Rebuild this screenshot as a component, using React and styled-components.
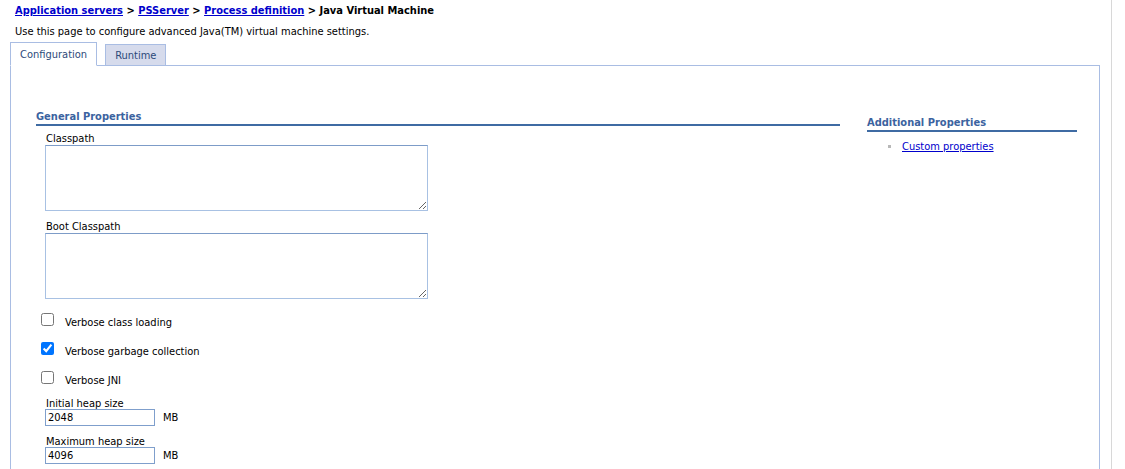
import React from 'react';
import styled, { createGlobalStyle } from 'styled-components';

const GlobalStyle = createGlobalStyle`
  html, body {
    margin: 0;
    padding: 0;
    background: #fff;
  }
  body {
    font-family: 'DejaVu Sans Condensed', 'DejaVu Sans', sans-serif;
    font-size: 11px;
    color: #000;
  }
`;

const Frame = styled.div`
  width: 1112px;
  height: 469px;
  border-right: 1px solid #d8d8d8;
  box-sizing: border-box;
  overflow: hidden;
`;

const Header = styled.div`
  padding: 4px 0 0 15px;
`;

const Breadcrumb = styled.div`
  font-weight: bold;
  font-size: 11px;
  line-height: 14px;
  a {
    color: #0000cc;
    text-decoration: underline;
  }
`;

const Description = styled.p`
  margin: 7px 0 0;
  line-height: 14px;
`;

const TabBar = styled.div`
  display: flex;
  align-items: flex-end;
  gap: 8px;
  margin: 2px 0 0 10px;
  height: 24px;
`;

const Tab = styled.div`
  box-sizing: border-box;
  height: ${p => (p.active ? '24px' : '22px')};
  padding: ${p => (p.active ? '1px' : '0')} 9px 0;
  display: flex;
  align-items: center;
  border: 1px solid #a9bde3;
  border-bottom: ${p => (p.active ? '1px solid #fff' : '1px solid #a9bde3')};
  background: ${p => (p.active ? '#fff' : '#d6dbec')};
  color: #2d4a7a;
  margin-bottom: -1px;
  position: relative;
  z-index: 1;
`;

const Panel = styled.div`
  margin-left: 10px;
  width: 1090px;
  height: 420px;
  box-sizing: border-box;
  border: 1px solid #a9bde3;
  border-bottom: none;
  display: flex;
  padding: 45px 0 0 25px;
  gap: 27px;
`;

const MainColumn = styled.div`
  width: 804px;
`;

const SideColumn = styled.div`
  width: 210px;
  padding-top: 6px;
`;

const SectionTitle = styled.div`
  font-weight: bold;
  color: #3b63a0;
  line-height: 12px;
  padding-bottom: 1px;
  border-bottom: 2px solid #3f6ba3;
`;

const Field = styled.div`
  padding-left: 9px;
  margin-top: ${p => p.top || 0}px;
`;

const Label = styled.div`
  line-height: ${p => (p.compact ? '10px' : '12px')};
  padding-left: 1px;
`;

const TextArea = styled.textarea`
  display: block;
  box-sizing: border-box;
  width: 383px;
  height: 66px;
  margin: 0;
  border: 1px solid #a8c1e3;
  border-top-color: #7d9cc8;
  font: inherit;
`;

const CheckRow = styled.label`
  display: flex;
  align-items: center;
  height: 29px;
  margin-left: -4px;
  input {
    margin: 0 11px 0 0;
    width: 13px;
    height: 13px;
    accent-color: #0075ff;
    position: relative;
    top: -2px;
  }
  span {
    position: relative;
    top: 1px;
  }
`;

const SizeRow = styled.div`
  display: flex;
  align-items: center;
  gap: 8px;
`;

const SizeInput = styled.input`
  box-sizing: border-box;
  width: 110px;
  height: 17px;
  margin: 0;
  padding: 0 2px;
  border: 1px solid #7f9fcc;
  font: inherit;
  font-size: 11px;
`;

const LinkList = styled.ul`
  list-style: none;
  margin: 8px 0 0;
  padding: 0 0 0 21px;
  li {
    display: flex;
    align-items: center;
    gap: 11px;
  }
  li::before {
    content: '';
    width: 3px;
    height: 3px;
    background: #b8b8b8;
  }
  a {
    color: #0000cc;
    text-decoration: underline;
  }
`;

export default function App() {
  return (
    <>
      <GlobalStyle />
      <Frame>
        <Header>
          <Breadcrumb>
            <a href="#">Application servers</a> &gt; <a href="#">PSServer</a> &gt;{' '}
            <a href="#">Process definition</a> &gt; Java Virtual Machine
          </Breadcrumb>
          <Description>Use this page to configure advanced Java(TM) virtual machine settings.</Description>
        </Header>
        <TabBar>
          <Tab active>Configuration</Tab>
          <Tab>Runtime</Tab>
        </TabBar>
        <Panel>
          <MainColumn>
            <SectionTitle>General Properties</SectionTitle>
            <Field top={7}>
              <Label>Classpath</Label>
              <TextArea />
            </Field>
            <Field top={10}>
              <Label>Boot Classpath</Label>
              <TextArea />
            </Field>
            <Field top={8}>
              <CheckRow>
                <input type="checkbox" />
                <span>Verbose class loading</span>
              </CheckRow>
              <CheckRow>
                <input type="checkbox" defaultChecked />
                <span>Verbose garbage collection</span>
              </CheckRow>
              <CheckRow>
                <input type="checkbox" />
                <span>Verbose JNI</span>
              </CheckRow>
            </Field>
            <Field top={5}>
              <Label compact>Initial heap size</Label>
              <SizeRow>
                <SizeInput defaultValue="2048" />
                <span>MB</span>
              </SizeRow>
            </Field>
            <Field top={11}>
              <Label compact>Maximum heap size</Label>
              <SizeRow>
                <SizeInput defaultValue="4096" />
                <span>MB</span>
              </SizeRow>
            </Field>
          </MainColumn>
          <SideColumn>
            <SectionTitle>Additional Properties</SectionTitle>
            <LinkList>
              <li>
                <a href="#">Custom properties</a>
              </li>
            </LinkList>
          </SideColumn>
        </Panel>
      </Frame>
    </>
  );
}
